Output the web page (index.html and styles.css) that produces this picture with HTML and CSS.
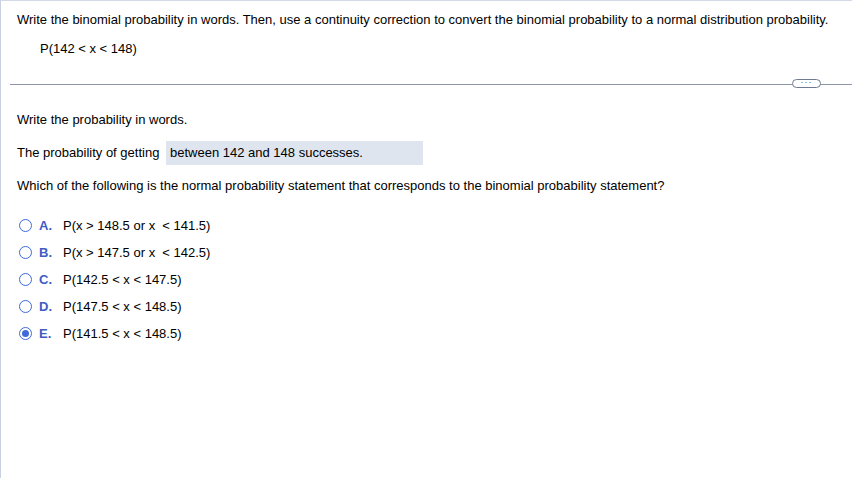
FILE: index.html
```html
<!DOCTYPE html>
<html lang="en">
<head>
    <meta charset="UTF-8">
    <title>Question</title>
    <link rel="stylesheet" href="styles.css">
</head>
<body>
    <div class="page">
        <div class="question">
            <p class="prompt">Write the binomial probability in words. Then, use a continuity correction to convert the binomial probability to a normal distribution probability.</p>
            <p class="expr">P(142 &lt; x &lt; 148)</p>
        </div>

        <div class="divider">
            <span class="more-button">&middot;&middot;&middot;</span>
        </div>

        <div class="answer">
            <p class="line">Write the probability in words.</p>
            <p class="line">The probability of getting <span class="filled">between 142 and 148 successes.</span></p>
            <p class="line">Which of the following is the normal probability statement that corresponds to the binomial probability statement?</p>

            <ul class="choices">
                <li class="choice"><span class="radio"></span><span class="letter">A.</span><span>P(x &gt; 148.5 or x &nbsp;&lt; 141.5)</span></li>
                <li class="choice"><span class="radio"></span><span class="letter">B.</span><span>P(x &gt; 147.5 or x &nbsp;&lt; 142.5)</span></li>
                <li class="choice"><span class="radio"></span><span class="letter">C.</span><span>P(142.5 &lt; x &lt; 147.5)</span></li>
                <li class="choice"><span class="radio"></span><span class="letter">D.</span><span>P(147.5 &lt; x &lt; 148.5)</span></li>
                <li class="choice"><span class="radio checked"></span><span class="letter">E.</span><span>P(141.5 &lt; x &lt; 148.5)</span></li>
            </ul>
        </div>
    </div>
</body>
</html>
```

FILE: styles.css
```css
body {
    margin: 0;
    font-family: "Liberation Sans", Arial, sans-serif;
    font-size: 13px;
    color: #000;
    background: #fff;
}

.page {
    height: 477px;
    border-top: 1px solid #d3d9e6;
    border-left: 1px solid #c9d0e0;
}

p {
    margin: 0;
}

.question {
    padding: 11px 16px 0 16px;
}

.prompt {
    line-height: 16px;
}

.expr {
    margin-top: 13px;
    padding-left: 23px;
    line-height: 16px;
}

.divider {
    margin: 27px 0 0 9px;
    height: 1px;
    background: #8e96a8;
    position: relative;
}

.more-button {
    position: absolute;
    right: 31px;
    top: -5px;
    width: 29px;
    height: 9px;
    box-sizing: border-box;
    border: 1px solid #6f7a90;
    border-radius: 5px;
    background: #fff;
    color: #4a5568;
    font-size: 9px;
    line-height: 5px;
    text-align: center;
    letter-spacing: 1px;
}

.answer {
    padding: 27px 16px 0 16px;
}

.line {
    line-height: 16px;
    margin-bottom: 13px;
}

.filled {
    display: inline-block;
    background: #dfe5ef;
    width: 249px;
    padding: 4px 4px;
    margin-left: 3px;
    line-height: 16px;
}

.choices {
    list-style: none;
    margin: 0;
    padding: 5px 0 0 2px;
}

.choice {
    display: flex;
    align-items: center;
    height: 27px;
}

.radio {
    width: 11px;
    height: 11px;
    border: 1px solid #3f6ad8;
    border-radius: 50%;
    margin-right: 7px;
    position: relative;
}

.radio.checked::after {
    content: "";
    position: absolute;
    left: 2px;
    top: 2px;
    width: 7px;
    height: 7px;
    border-radius: 50%;
    background: #3f6ad8;
}

.letter {
    color: #3d5cc4;
    font-weight: bold;
    width: 24px;
}
```
